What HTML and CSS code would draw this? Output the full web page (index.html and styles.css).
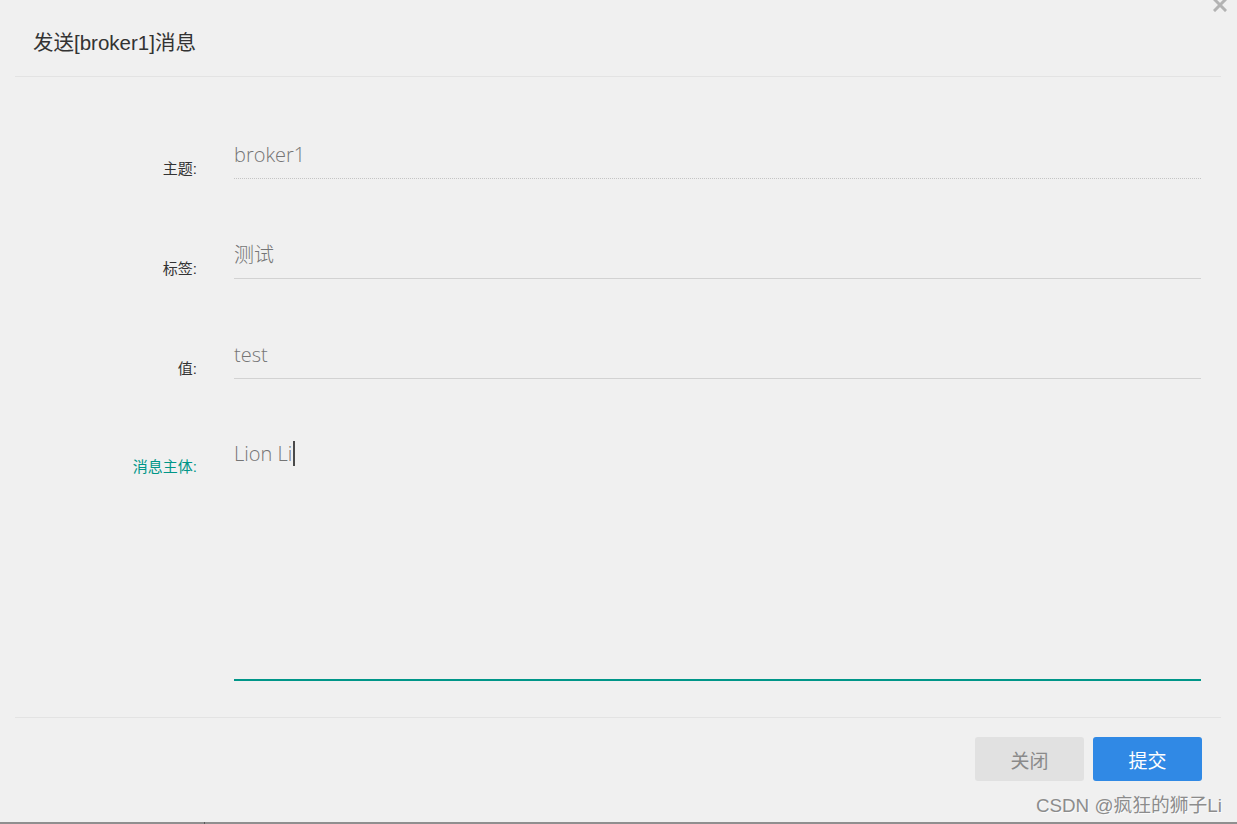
FILE: index.html
```html
<!DOCTYPE html>
<html lang="zh-CN">
<head>
<meta charset="utf-8">
<title>发送消息</title>
<link rel="stylesheet" href="styles.css">
</head>
<body>
<div class="layer">
  <div class="layer-head">发送[broker1]消息</div>
  <a class="layer-close" title="关闭">
    <svg width="14" height="14" viewBox="0 0 14 14"><path d="M2 2 L12 12 M12 2 L2 12" stroke="#b3b3b3" stroke-width="3" stroke-linecap="square" fill="none"/></svg>
  </a>
  <div class="form">
    <div class="row">
      <label class="label">主题:</label>
      <div class="field field-dotted">broker1</div>
    </div>
    <div class="row">
      <label class="label">标签:</label>
      <div class="field">测试</div>
    </div>
    <div class="row">
      <label class="label">值:</label>
      <div class="field">test</div>
    </div>
    <div class="row row-last">
      <label class="label label-active">消息主体:</label>
      <div class="field field-area">Lion Li<span class="caret"></span></div>
    </div>
  </div>
  <div class="layer-foot">
    <button class="btn btn-close">关闭</button>
    <button class="btn btn-submit">提交</button>
  </div>
  <div class="watermark">CSDN @疯狂的狮子Li</div>
</div>
<div class="bottom-bar"><span class="tick"></span></div>
</body>
</html>
```
FILE: styles.css
```css
html, body {
  margin: 0;
  padding: 0;
}
body {
  background: #f0f0f0;
  height: 824px;
  overflow: hidden;
  display: flex;
  flex-direction: column;
  font-family: "Liberation Sans", "Noto Sans CJK SC", sans-serif;
  color: #333;
}
.layer {
  flex: 1;
  position: relative;
}
.layer-head {
  margin: 0 16px 0 15px;
  padding: 9px 0 0 18px;
  height: 67px;
  line-height: 67px;
  font-size: 20.5px;
  color: #333;
  border-bottom: 1px solid #e3e3e3;
}
.layer-close {
  position: absolute;
  top: -2px;
  right: 10px;
  width: 14px;
  height: 14px;
  display: block;
}
.layer-close svg {
  display: block;
}
.form {
  padding: 57px 36px 36px 15px;
}
.row {
  display: flex;
  align-items: flex-start;
  margin-bottom: 55px;
}
.row-last {
  margin-bottom: 0;
}
.label {
  width: 182px;
  flex: none;
  margin-right: 37px;
  padding-top: 25px;
  text-align: right;
  font-size: 15px;
  line-height: 20px;
  color: #333;
}
.label-active {
  color: #009688;
  padding-top: 23px;
}
.field {
  flex: 1;
  height: 37px;
  padding-top: 7px;
  font-family: "Open Sans", "Noto Sans CJK SC", sans-serif;
  font-weight: 300;
  font-size: 20px;
  line-height: 28px;
  color: #757575;
  border-bottom: 1px solid #d2d2d2;
}
.field-dotted {
  border-bottom: 1px dotted #c4c4c4;
}
.field-area {
  height: 239px;
  padding-top: 6px;
  border-bottom: 2px solid #009688;
}
.caret {
  display: inline-block;
  width: 2px;
  height: 25px;
  background: #4a4a4a;
  vertical-align: -5px;
  margin-left: 1px;
}
.layer-foot {
  margin: 0 16px 0 15px;
  border-top: 1px solid #e3e3e3;
  padding: 19px 19px 0 0;
  display: flex;
  justify-content: flex-end;
  gap: 9px;
}
.btn {
  width: 109px;
  height: 44px;
  border: none;
  border-radius: 3px;
  font-family: "Noto Sans CJK SC", sans-serif;
  font-size: 19px;
  padding: 0;
  cursor: pointer;
}
.btn-close {
  background: #e1e1e1;
  color: #8a8a8a;
}
.btn-submit {
  background: #3089e5;
  color: #fff;
}
.watermark {
  position: absolute;
  right: 15px;
  bottom: 5px;
  font-family: "Liberation Sans", "Noto Sans CJK SC", sans-serif;
  font-size: 18.8px;
  color: #8c8c8c;
  text-shadow: 1px 1px 0 #fafafa;
}
.bottom-bar {
  height: 2px;
  background: #8f8f8f;
  flex: none;
}
.tick {
  display: block;
  margin-left: 204px;
  width: 1px;
  height: 2px;
  background: #5a5a5a;
}
```
